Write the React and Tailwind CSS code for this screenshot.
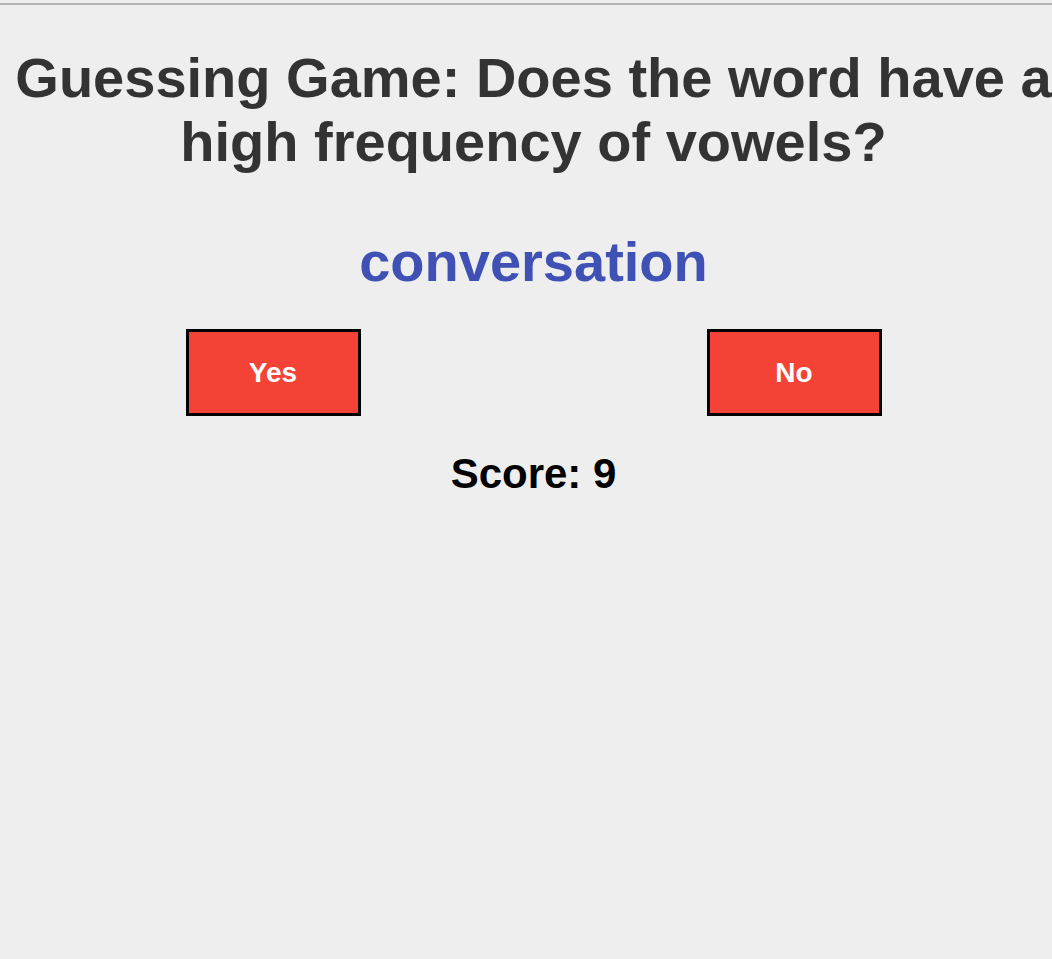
import React, { useState } from 'react';

const words = ['conversation'];

export default function App() {
  const [score, setScore] = useState(9);
  const word = words[0];

  const guess = () => setScore((s) => s + 1);

  return (
    <div className="min-h-screen bg-[#eeeeee] pt-[3px] font-['Liberation_Sans',Arial,sans-serif]">
      <div className="h-[2px] bg-[#b5b5b5]" />
      <main className="flex flex-col items-center pl-[15px] text-center">
        <h1 className="mt-[41px] text-[56px] leading-[64px] font-bold text-[#333333]">
          Guessing Game: Does the word have a high frequency of vowels?
        </h1>
        <p className="mt-[56px] text-[56px] leading-[64px] font-bold text-[#3f51b5]">{word}</p>
        <div className="mt-[35px] flex gap-[346px]">
          <button
            onClick={guess}
            className="w-[175px] h-[87px] border-[3px] border-black bg-[#f44336] text-white text-[28px] font-bold"
          >
            Yes
          </button>
          <button
            onClick={guess}
            className="w-[175px] h-[87px] border-[3px] border-black bg-[#f44336] text-white text-[28px] font-bold"
          >
            No
          </button>
        </div>
        <p className="mt-[34px] text-[42px] leading-[48px] font-bold text-black">Score: {score}</p>
      </main>
    </div>
  );
}
